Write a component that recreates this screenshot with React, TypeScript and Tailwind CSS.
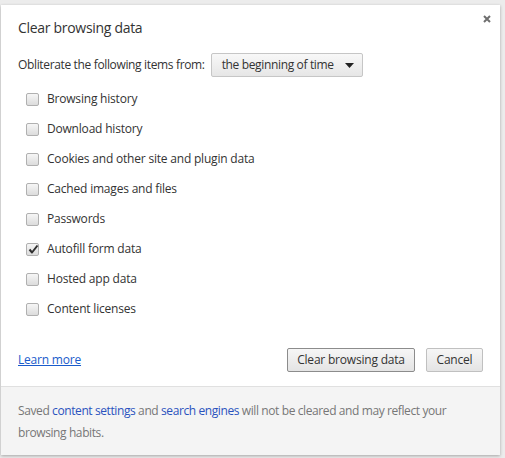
import React from "react";

const items: [string, boolean][] = [
  ["Browsing history", false],
  ["Download history", false],
  ["Cookies and other site and plugin data", false],
  ["Cached images and files", false],
  ["Passwords", false],
  ["Autofill form data", true],
  ["Hosted app data", false],
  ["Content licenses", false],
];

function Box({ checked }: { checked: boolean }) {
  return (
    <span className="relative flex h-[13px] w-[13px] shrink-0 items-center justify-center rounded-[2px] border border-[#b0b0b0] bg-gradient-to-b from-[#f6f6f6] to-[#dcdcdc]">
      {checked && (
        <svg width="11" height="11" viewBox="0 0 11 11" className="absolute left-[1px] top-[0px]">
          <path d="M1.5 5.5 L4 8.5 L9.5 1.5" stroke="#303030" strokeWidth="2" fill="none" strokeLinejoin="round" />
        </svg>
      )}
    </span>
  );
}

export default function App() {
  return (
    <div className="h-[458px] w-[505px] bg-[#ececec] pt-[5px] pl-[1px]" style={{ fontFamily: '"Open Sans", "Noto Sans", sans-serif' }}>
      <div className="flex h-[450px] w-[499px] flex-col bg-white shadow-[0_1px_3px_rgba(0,0,0,0.3)]">
        <div className="flex items-start justify-between pl-[17px] pr-[9px] pt-[10px]">
          <div className="mt-[3px] text-[14px] leading-[20px] tracking-[-0.3px] text-[#333]">Clear browsing data</div>
          <svg width="8" height="8" viewBox="0 0 8 8">
            <path d="M1 1 L7 7 M7 1 L1 7" stroke="#6f6f6f" strokeWidth="2" />
          </svg>
        </div>
        <div className="mt-[15px] flex items-center whitespace-nowrap pl-[17px] text-[12px] tracking-[-0.35px] text-[#333]">
          <span>Obliterate the following items from:</span>
          <div className="ml-[6px] flex h-[24px] w-[152px] items-center justify-between rounded-[2px] border border-[#c6c6c6] bg-gradient-to-b from-[#f8f8f8] to-[#e6e6e6] pl-[10px] pr-[8px] text-[#333]">
            <span>the beginning of time</span>
            <svg width="9" height="5" viewBox="0 0 9 5"><path d="M0 0 H9 L4.5 5 Z" fill="#222" /></svg>
          </div>
        </div>
        <div className="mt-[7px] flex flex-col pl-[25px]">
          {items.map(([label, c]) => (
            <div key={label} className="flex h-[30px] items-center gap-[8px] text-[12px] tracking-[-0.2px] text-[#333]">
              <Box checked={c} />
              <span>{label}</span>
            </div>
          ))}
        </div>
        <div className="mt-[24px] flex items-center justify-between pl-[17px] pr-[17px]">
          <a className="text-[12px] tracking-[-0.2px] text-[#1a5bcb] underline">Learn more</a>
          <div className="flex gap-[11px]">
            <button className="h-[24px] w-[128px] rounded-[2px] border border-[#8c8c8c] bg-gradient-to-b from-[#f6f6f6] to-[#e4e4e4] text-[12px] tracking-[-0.2px] text-[#333]">
              Clear browsing data
            </button>
            <button className="h-[24px] w-[57px] rounded-[2px] border border-[#c0c0c0] bg-gradient-to-b from-[#f6f6f6] to-[#e4e4e4] text-[12px] tracking-[-0.2px] text-[#333]">
              Cancel
            </button>
          </div>
        </div>
        <div className="mt-[14px] flex-1 border-t border-[#e0e0e0] bg-[#f4f4f4] pl-[17px] pr-[40px] pt-[13px] text-[12px] leading-[22px] tracking-[-0.4px] text-[#777]">
          Saved <span className="text-[#2a52be]">content settings</span> and{" "}
          <span className="text-[#2a52be]">search engines</span> will not be cleared and may reflect your browsing habits.
        </div>
      </div>
    </div>
  );
}
